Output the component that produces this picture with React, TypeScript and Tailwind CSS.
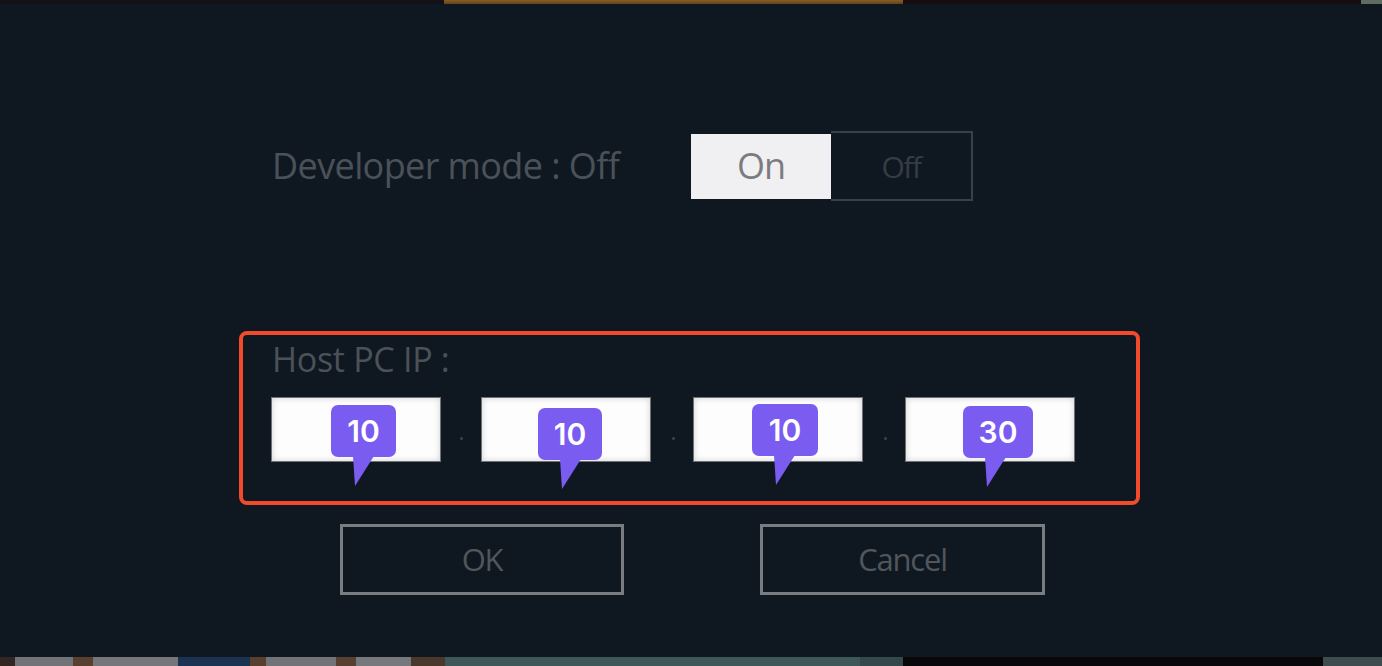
const tvFont = { fontFamily: '"Open Sans", "Noto Sans", sans-serif' };

function Badge({ label, className }: { label: string; className: string }) {
  return (
    <div className={"absolute " + className}>
      <div
        className="flex h-[52px] w-full items-center justify-center rounded-[7px] bg-[#7b5cf0] text-[30px] font-semibold text-white"
        style={{ fontFamily: "Inter, sans-serif" }}
      >
        {label}
      </div>
      <svg className="absolute left-0 top-[51px]" width="50" height="32" viewBox="0 0 50 32">
        <path d="M22 0 L43 0 L24 30 Z" fill="#7b5cf0" />
      </svg>
    </div>
  );
}

function IpField({ children }: { children: React.ReactNode }) {
  return (
    <div className="relative h-[65px] w-[170px] border border-[#6f7276] bg-[#fdfdfd] shadow-[inset_0_0_6px_rgba(0,0,0,0.18)]">
      {children}
    </div>
  );
}

function Dot() {
  return (
    <div className="flex w-[40px] items-end justify-center pb-[22px]">
      <span className="h-[3px] w-[3px] rounded-full bg-[#3d444c]" />
    </div>
  );
}

export default function App() {
  return (
    <div className="flex h-[666px] w-[1382px] flex-col overflow-hidden bg-[#0f1821]" style={tvFont}>
      {/* top strip */}
      <div className="flex h-[4px] shrink-0">
        <div className="w-[444px] bg-[#131017]" />
        <div className="w-[459px] bg-gradient-to-b from-[#8a5e22] to-[#5e4420]" />
        <div className="w-[458px] bg-[#170c10]" />
        <div className="flex-1 bg-[#5d6d62]" />
      </div>

      {/* developer mode row */}
      <div className="ml-[272px] mt-[127px] flex h-[70px] items-center">
        <div className="w-[419px] text-[36px] leading-none tracking-[-0.6px] text-[#4b5158]">
          Developer mode : Off
        </div>
        <div className="flex h-[70px] items-center">
          <div className="flex h-[65px] w-[140px] items-center justify-center bg-[#f0f0f2] text-[36px] tracking-[-1px] text-[#7c7c80]">
            On
          </div>
          <div className="flex h-[70px] w-[142px] items-center justify-center border-2 border-l-0 border-[#3a4048] text-[30px] tracking-[-1.5px] text-[#363c44]">
            Off
          </div>
        </div>
      </div>

      {/* host ip box */}
      <div className="ml-[239px] mt-[130px] h-[174px] w-[901px] rounded-[8px] border-4 border-[#f24a2a] pl-[28px] pt-[4px]">
        <div className="pl-[1px] text-[34px] leading-[40px] tracking-[-0.3px] text-[#4b5158]">Host PC IP :</div>
        <div className="mt-[18px] flex">
          <IpField>
            <Badge label="10" className="left-[59px] top-[7px] w-[65px]" />
          </IpField>
          <Dot />
          <IpField>
            <Badge label="10" className="left-[56px] top-[10px] w-[64px]" />
          </IpField>
          <div className="w-[2px]" />
          <Dot />
          <IpField>
            <Badge label="10" className="left-[58px] top-[6px] w-[66px]" />
          </IpField>
          <div className="w-[2px]" />
          <Dot />
          <IpField>
            <Badge label="30" className="left-[57px] top-[8px] w-[70px]" />
          </IpField>
        </div>
      </div>

      {/* buttons */}
      <div className="ml-[340px] mt-[19px] flex gap-[136px]">
        <div className="flex h-[71px] w-[284px] items-center justify-center border-[3px] border-[#787d82] text-[31px] tracking-[-1.2px] text-[#50565c]">
          OK
        </div>
        <div className="flex h-[71px] w-[285px] items-center justify-center border-[3px] border-[#787d82] text-[31px] tracking-[-1.2px] text-[#50565c]">
          Cancel
        </div>
      </div>

      <div className="flex-1" />

      {/* bottom strip */}
      <div className="flex h-[9px] shrink-0 opacity-80">
        <div className="w-[15px] bg-[#3a2a22]" />
        <div className="w-[58px] bg-[#8a8a8c]" />
        <div className="w-[20px] bg-[#6b4a35]" />
        <div className="w-[85px] bg-[#8e8e90]" />
        <div className="w-[72px] bg-[#1e3a5c]" />
        <div className="w-[16px] bg-[#6b4a35]" />
        <div className="w-[70px] bg-[#8a8a8c]" />
        <div className="w-[20px] bg-[#6b4a35]" />
        <div className="w-[55px] bg-[#909092]" />
        <div className="w-[34px] bg-[#5a4030]" />
        <div className="w-[415px] bg-[#4a6868]" />
        <div className="w-[43px] bg-[#3e5656]" />
        <div className="w-[420px] bg-[#070405]" />
        <div className="flex-1 bg-[#4a5a58]" />
      </div>
    </div>
  );
}
